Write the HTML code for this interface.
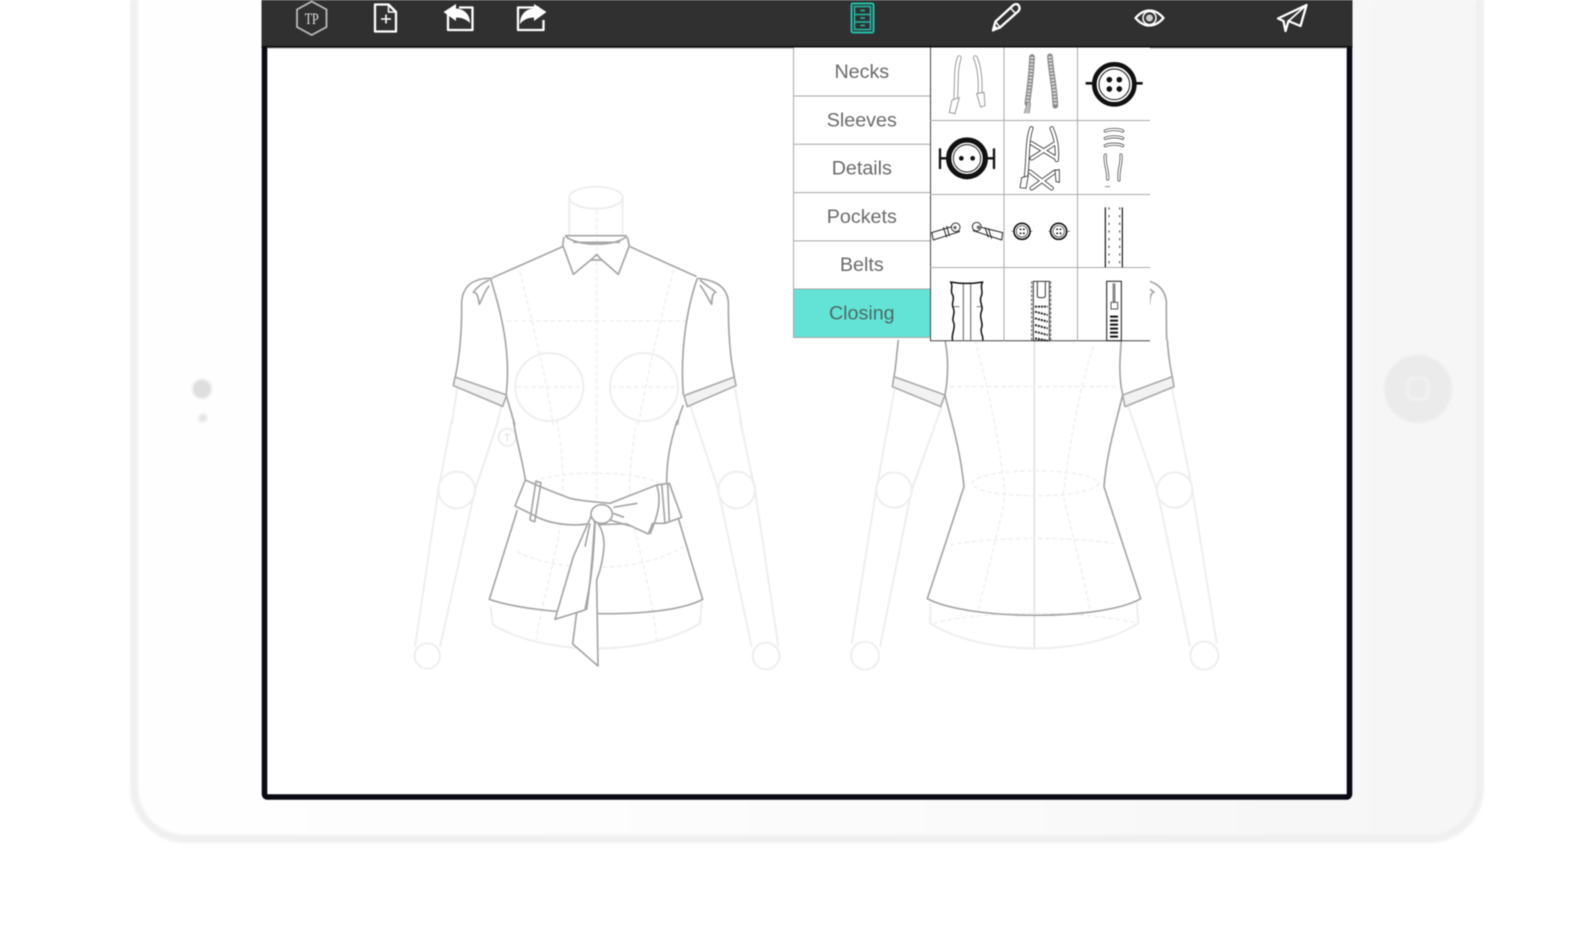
<!DOCTYPE html>
<html><head><meta charset="utf-8"><style>
html,body{margin:0;padding:0;background:#fff;width:1577px;height:935px;overflow:hidden}
svg{position:absolute;left:0;top:0;display:block;filter:blur(.4px)}
text{font-family:"Liberation Sans",sans-serif}
.g{fill:none;stroke:#eeeeee;stroke-width:6}
.d{fill:none;stroke:#f0f0f0;stroke-width:4.500;stroke-dasharray:14 8}
.s{fill:none;stroke:#a6a6a6;stroke-width:5;stroke-linejoin:round}
.f{fill:#fff;stroke:#a6a6a6;stroke-width:5;stroke-linejoin:round}
.c{fill:#f2f2f2;stroke:#acacac;stroke-width:5;stroke-linejoin:round}
.i{fill:none;stroke:#fff;stroke-width:2.300;stroke-linejoin:round}
.to{fill:none;stroke:#888;stroke-width:14;stroke-linecap:round}
.ti{fill:none;stroke:#fff;stroke-width:9;stroke-linecap:round}
.do{fill:none;stroke:#333;stroke-width:13;stroke-linecap:round}
.di{fill:none;stroke:#fff;stroke-width:8;stroke-linecap:round}
</style></head><body>
<svg width="1577" height="935" viewBox="0 0 1577 935">
<defs><linearGradient id="tab" x1="0" x2="1" y1="0" y2="0"><stop offset="0" stop-color="#fefefe"/><stop offset=".35" stop-color="#fdfdfd"/><stop offset=".8" stop-color="#f8f8f8"/><stop offset="1" stop-color="#f6f6f7"/></linearGradient><filter id="b1"><feGaussianBlur stdDeviation="1.200"/></filter></defs>
<rect x="134" y="-100" width="1346" height="939" rx="52" fill="url(#tab)" stroke="#f0f0f0" stroke-width="8" filter="url(#b1)"/>
<g filter="url(#b1)"><circle cx="202" cy="389" r="9.500" fill="#dedede"/><circle cx="202.700" cy="418" r="4.500" fill="#e6e6e6"/>
<circle cx="1418" cy="389" r="34" fill="#ebebeb"/><rect x="1408" y="378" width="20" height="21" rx="5" fill="none" stroke="#f5f5f5" stroke-width="2"/></g>
<rect x="264.500" y="-10" width="1085" height="807" rx="3" fill="#fff" stroke="#0a0a14" stroke-width="5.600"/>
<rect x="261.500" y="0" width="1091" height="47" fill="#303030"/>
<rect x="261.500" y="46" width="1091" height="1.500" fill="#0c0c0c"/>
<rect x="267" y="47.500" width="1079" height="1" fill="#999"/>

<!-- icons -->
<path d="M311.700 1.500L326.500 9.500V27L311.700 35L297 27V9.500Z" fill="none" stroke="#bbb" stroke-width="1.800"/>
<text x="311.700" y="24" font-size="16" text-anchor="middle" textLength="14" lengthAdjust="spacingAndGlyphs" fill="#e2e2e2" style="font-family:'Liberation Serif',serif">TP</text>
<path class="i" d="M375 4.500H388.500L396 12V31.500H375Z"/><path d="M388.500 4.500V12H396" fill="none" stroke="#fff" stroke-width="1.500"/><path d="M381 19H391M386 14.500V23.500" stroke="#fff" stroke-width="1.600"/>
<path class="i" d="M448 14V30H472.500V7.500H459"/><path d="M443.500 12L456 4V8.500C464 9 470 14 470 23C466 19 461 17.500 456 17.500V21Z" fill="#fff"/>
<path class="i" d="M539 7.500H518V30H543.500V20"/><path d="M546.500 12L534 4V8.500C526 9 520 14 520 24C524 19 529 17.500 534 17.500V21Z" fill="#fff"/>
<rect x="851.500" y="3.500" width="22" height="29" rx="1.500" fill="none" stroke="#1fbfa8" stroke-width="2"/>
<path d="M854.500 6.500H870.500V14.500H854.500ZM854.500 14.500H870.500V22H854.500ZM854.500 22H870.500V29.500H854.500Z" fill="none" stroke="#1fbfa8" stroke-width="1.500"/>
<path d="M860.500 10.500H865M860.500 18H865M860.500 25.500H865" stroke="#1fbfa8" stroke-width="1.600"/>
<path class="i" d="M993 30L995.500 21.500L1013.500 5C1015.500 3.500 1018 4 1019 6C1020 8 1019.500 10 1018 11.500L1000 27.500Z"/><path d="M995.500 21.500L1000 27.500M1010.500 8L1016 14" stroke="#fff" stroke-width="1.500"/><path d="M992 32L994.500 25L998.500 29Z" fill="#fff"/>
<path class="i" stroke-width="2.500" d="M1135.500 18C1144 8 1155 8 1163.500 18C1155 28 1144 28 1135.500 18Z"/><circle cx="1149.500" cy="18" r="6.500" fill="none" stroke="#fff" stroke-width="1.500"/><circle cx="1149.500" cy="18" r="3.500" fill="#ccc"/>
<path class="i" stroke-width="2.500" d="M1278 18.500L1306.500 5L1300.500 26L1288.500 21L1285.500 31L1283.500 21Z"/><path d="M1306.500 5L1288.500 21" stroke="#fff" stroke-width="1.800"/>

<!-- front figure upper -->
<g transform="translate(400 175) scale(.33333)">
<ellipse class="g" cx="588" cy="68" rx="80" ry="33"/><path class="g" d="M508 68V180M668 68V180"/>
<path class="d" d="M590 105V750M320 438H860M360 290C385 400 430 560 460 750M820 285C790 400 750 560 715 750M350 636H540M635 636H825"/>
<circle class="g" cx="448" cy="636" r="102"/><circle class="g" cx="732" cy="636" r="102"/>
<path class="g" d="M172 640L155 750M305 690L290 750M1005 640L1025 750M870 690L890 750"/>
<path class="s" d="M488 215L278 308M690 215L890 305"/>
<path class="s" d="M495 182H680M492 186L488 210L520 298L572 255H606L655 298L688 212L682 186"/>
<path class="s" stroke-width="3" stroke="#bbb" d="M497 184C530 215 650 215 680 184M520 202H660M572 256L590 238L606 256"/>
<path class="s" d="M278 310C230 308 190 325 185 380C186 470 178 550 165 610M318 660C335 530 300 400 272 312"/>
<path class="c" d="M165 606L320 660L308 694L160 632Z"/>
<path class="s" stroke-width="3" d="M268 315C245 325 228 340 220 352C228 352 234 358 238 388C248 370 252 350 268 332"/>
<path class="s" d="M892 310C940 315 980 330 985 380C985 470 990 550 1003 605M850 660C840 530 860 400 892 310"/>
<path class="c" d="M1003 606L852 662L862 695L1008 632Z"/>
<path class="s" stroke-width="3" d="M900 315C915 330 935 340 948 352C940 352 936 362 935 388C925 372 915 350 900 330"/>
<path class="s" d="M318 660C328 690 335 720 345 750M850 690C840 715 835 730 832 750"/>
</g>

<!-- front figure lower -->
<g transform="translate(400 420) scale(.33333)">
<path class="g" d="M155 0L115 210L45 680M295 0L225 210L120 680M885 0L955 210L1055 680M1020 0L1065 210L1135 680"/>
<circle class="g" style="fill:#fff" cx="170" cy="210" r="55"/><circle class="g" style="fill:#fff" cx="82" cy="708" r="38"/><circle class="g" style="fill:#fff" cx="1010" cy="210" r="55"/><circle class="g" style="fill:#fff" cx="1098" cy="708" r="40"/>
<circle class="g" cx="322" cy="52" r="26"/><text x="322" y="64" font-size="34" text-anchor="middle" fill="#ddd">T</text>
<path class="g" d="M272 560C275 580 275 600 280 615C440 710 740 710 900 610L905 545"/>
<path class="d" d="M590 0V720M470 0C490 100 495 200 480 320C460 450 420 560 410 660M710 0C695 100 680 200 695 300C730 420 760 560 770 660M400 185C480 150 700 150 780 190M350 395C480 460 720 460 850 380"/>
<path class="s" d="M340 0C350 70 368 120 376 180M832 0C810 70 800 120 800 190M352 270L268 538C400 585 780 605 908 538L835 295"/>
<path class="f" d="M376 180L345 258L400 285C440 310 510 320 560 312C590 318 640 310 680 312L745 342L758 310L795 310L845 292L808 190L770 195L630 250C590 245 550 245 510 235C470 220 430 205 376 180Z"/>
<path class="s" stroke-width="4" d="M408 184L390 300L404 305L423 188ZM770 195C785 240 775 285 750 342M785 190L795 310M803 190L808 305M640 262L712 250M640 280L672 292M630 300L690 318"/>
<path class="f" d="M575 285L520 410L465 598L555 570L578 450L585 310Z"/>
<path class="f" d="M590 305C620 345 615 390 600 450L590 480L594 738L518 672L530 578L555 570C570 500 580 440 585 310Z"/>
<path class="s" stroke-width="4" d="M570 310L555 380M585 300C580 340 580 420 560 570"/>
<ellipse class="f" cx="605" cy="282" rx="32" ry="28"/>
</g>

<!-- back figure upper sleeve tip -->
<g transform="translate(838 175) scale(.33333)">
<path class="s" d="M892 310C940 315 980 330 985 380C985 430 985 460 986 495"/>
<path class="s" stroke-width="3" d="M900 315C915 330 935 340 948 352C940 352 936 362 935 388C925 372 915 350 900 330"/>
</g>
<!-- back figure -->
<g transform="translate(840 340) scale(.33333)">
<path class="g" d="M165 140L109 450L35 910M305 200L215 450L120 920M865 200L951 450L1050 920M995 140L1057 450L1130 910"/>
<circle class="g" style="fill:#fff" cx="162" cy="450" r="53"/><circle class="g" style="fill:#fff" cx="75" cy="947" r="42"/><circle class="g" style="fill:#fff" cx="1004" cy="450" r="53"/><circle class="g" style="fill:#fff" cx="1093" cy="947" r="42"/>
<path class="g" stroke="#e4e4e4" style="stroke:#e6e6e6" d="M583 0V930"/>
<path class="g" d="M272 790L270 850C430 950 740 950 895 850L890 780"/>
<path class="d" d="M330 140H835M405 0C440 130 480 300 495 465C490 520 440 700 415 810M760 20C720 140 690 300 670 465C680 520 730 700 750 810M395 430C410 380 760 380 775 430C760 480 410 480 395 430M330 615C450 590 700 590 820 610M280 850C430 810 740 810 890 850"/>
<path class="s" d="M175 0C170 40 168 80 162 110M315 165C325 110 325 50 315 0"/>
<path class="c" d="M162 110L315 165L302 200L157 140Z"/>
<path class="s" d="M982 0C985 40 990 80 997 110M848 165C835 110 840 50 844 0"/>
<path class="c" d="M997 110L848 165L855 200L1002 140Z"/>
<path class="s" d="M315 165C330 230 360 320 372 440L262 776C380 840 780 845 902 776L792 440C800 340 825 260 848 165"/>
</g>

<!-- menu -->
<rect x="793" y="47.500" width="137" height="290" fill="#fff"/>
<rect x="794" y="289" width="136" height="48" fill="#62e3d6"/>
<path d="M793.500 47.500V337.500H930M794 96H930M794 144.300H930M794 192.600H930M794 240.900H930M794 289H930" fill="none" stroke="#a8a8a8" stroke-width="1"/>
<g font-size="19.700" fill="#6a6a6a" text-anchor="middle">
<text x="861.800" y="78">Necks</text><text x="861.800" y="126.500">Sleeves</text><text x="861.800" y="174.500">Details</text><text x="861.800" y="222.800">Pockets</text><text x="861.800" y="271">Belts</text><text x="861.800" y="319.600" fill="#4d6b68">Closing</text>
</g>

<!-- grid -->
<rect x="930.500" y="47.500" width="219.500" height="293.500" fill="#fff"/>
<path d="M930.500 47.500V341M930 340.700H1150" fill="none" stroke="#444" stroke-width="1"/>
<path d="M930 120.500H1150M930 194.500H1150M930 267.500H1150" fill="none" stroke="#aaa" stroke-width="1"/>
<path d="M1004 47.500V341M1077.500 47.500V341" fill="none" stroke="#aaa" stroke-width="1"/>
<g transform="translate(920 45) scale(.33333)">
<path class="to" d="M118 38C104 80 112 120 106 170M166 38C180 70 182 110 180 150"/><path class="ti" d="M118 38C104 80 112 120 106 170M166 38C180 70 182 110 180 150"/>
<path d="M96 165L118 158L105 206L88 202ZM170 146L192 142L195 182L182 186Z" fill="#fff" stroke="#999" stroke-width="3"/>
<path d="M336 36C335 75 330 120 322 175M390 34C392 75 404 125 406 182" fill="none" stroke="#8a8a8a" stroke-width="17" stroke-linecap="round"/><path d="M336 36C335 75 330 120 322 175M390 34C392 75 404 125 406 182" fill="none" stroke="#ddd" stroke-width="10" stroke-dasharray="5 5"/><path d="M312 205L322 170L332 175L328 205" fill="#bbb" stroke="#888" stroke-width="2"/>
<circle cx="583" cy="118" r="60" fill="none" stroke="#111" stroke-width="14"/><circle cx="583" cy="118" r="46" fill="none" stroke="#111" stroke-width="3"/><circle cx="568" cy="104" r="8.500" fill="#111"/><circle cx="598" cy="104" r="8.500" fill="#111"/><circle cx="568" cy="132" r="8.500" fill="#111"/><circle cx="598" cy="132" r="8.500" fill="#111"/><path d="M497 115H525M640 115H668" stroke="#111" stroke-width="8"/>
<circle cx="141" cy="340" r="55" fill="none" stroke="#111" stroke-width="16"/><circle cx="141" cy="340" r="41" fill="none" stroke="#222" stroke-width="3"/><circle cx="124" cy="340" r="7" fill="#111"/><circle cx="158" cy="340" r="7" fill="#111"/><path d="M60 340H85M198 340H222M60 310V372M222 310V372" stroke="#111" stroke-width="7"/>
<path class="do" d="M334 250C320 290 325 340 318 395M395 250C412 290 412 320 410 345M335 295L410 340M405 295L335 340M330 380L395 430M405 380L335 430"/><path class="di" d="M334 250C320 290 325 340 318 395M395 250C412 290 412 320 410 345M335 295L410 340M405 295L335 340M330 380L395 430M405 380L335 430"/>
<path d="M305 398L325 392L318 430L300 428Z" fill="#fff" stroke="#333" stroke-width="2.500"/><path d="M405 376L418 374L418 412L408 410Z" fill="#fff" stroke="#333" stroke-width="2.500"/>
<g fill="none" stroke="#333" stroke-width="9" stroke-linecap="round"><path d="M556 258C570 252 595 252 608 258M556 280C570 274 595 274 608 280M556 302C570 296 595 296 608 302M556 330C552 355 565 375 563 402M603 330C606 355 594 375 597 405"/></g>
<g fill="none" stroke="#fff" stroke-width="5" stroke-linecap="round"><path d="M556 258C570 252 595 252 608 258M556 280C570 274 595 274 608 280M556 302C570 296 595 296 608 302M556 330C552 355 565 375 563 402M603 330C606 355 594 375 597 405"/></g>
<path d="M555 425H570" stroke="#555" stroke-width="2"/>
</g>
<g transform="translate(920 190) scale(.33333)">
<path fill="#fff" stroke="#222" stroke-width="3" d="M35 128L112 105L118 125L40 150ZM168 108L248 128L245 150L160 122Z"/><path d="M70 112L80 142M80 108L88 138M195 112L205 142M205 115L215 146" stroke="#222" stroke-width="3"/><circle cx="107" cy="112" r="13" fill="#fff" stroke="#333" stroke-width="3"/><circle cx="170" cy="110" r="13" fill="#fff" stroke="#333" stroke-width="3"/><circle cx="105" cy="113" r="5" fill="#666"/><circle cx="175" cy="112" r="5" fill="#666"/>
<g fill="none" stroke="#111"><circle cx="306" cy="124" r="24" stroke-width="5"/><circle cx="306" cy="124" r="17" stroke-width="2"/><circle cx="416" cy="124" r="24" stroke-width="5"/><circle cx="416" cy="124" r="17" stroke-width="2"/></g>
<path d="M299 118H314M299 130H314M409 118H424M409 130H424" stroke="#111" stroke-width="5" stroke-dasharray="5 5"/><path d="M275 124H281M331 124H337M385 124H391M441 124H450" stroke="#333" stroke-width="2"/>
<path d="M556 52V232M607 52V232" stroke="#111" stroke-width="3.500"/><path d="M567 52V232M599 52V232" stroke="#444" stroke-width="3" stroke-dasharray="7 16"/>
<path fill="none" stroke="#111" stroke-width="4.500" d="M90 276C125 282 155 282 190 276M92 276C102 290 88 300 98 315C105 330 92 340 100 355C108 370 92 385 102 400C106 420 92 435 98 452M188 276C178 290 192 305 183 320C176 335 192 350 184 365C176 385 192 400 184 415C180 430 192 440 188 452"/>
<path d="M130 282V452M152 282V452" stroke="#777" stroke-width="3.500"/><path d="M98 350H118M170 350H188" stroke="#333" stroke-width="2"/>
<path fill="none" stroke="#333" stroke-width="3" d="M340 274H388V452H340ZM352 276V318C352 325 376 325 376 318V276"/><path d="M335 274V452M392 274V452" stroke="#555" stroke-width="3" stroke-dasharray="8 5"/><path d="M345 350L383 350M345 365L383 375M345 385L383 395M345 405L383 415M345 425L383 435M345 445L383 452" stroke="#222" stroke-width="6" stroke-dasharray="6 3"/>
<path fill="none" stroke="#333" stroke-width="3.500" d="M560 274H604V452H560Z"/><path d="M582 280V340" stroke="#888" stroke-width="9"/><rect x="573" y="337" width="20" height="20" fill="#fff" stroke="#555" stroke-width="3"/><path d="M570 380H594M570 392H594M570 404H594M570 416H594M570 428H594M570 440H594" stroke="#111" stroke-width="6"/>
</g>
</svg>
</body></html>
